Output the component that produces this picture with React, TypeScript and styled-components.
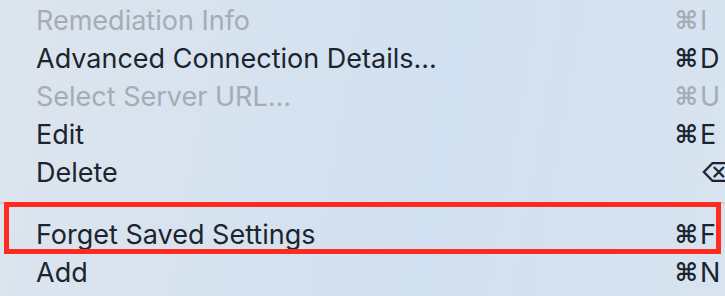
import React from "react";
import styled, { createGlobalStyle } from "styled-components";

const GlobalStyle = createGlobalStyle`
  html, body {
    margin: 0;
    padding: 0;
    width: 725px;
    height: 296px;
    overflow: hidden;
  }
`;

interface ItemData {
  label: string;
  modifier?: string;
  keyGlyph: string;
  disabled?: boolean;
  marked?: boolean;
}

const items: ItemData[] = [
  { label: "Remediation Info", modifier: "⌘", keyGlyph: "I", disabled: true },
  { label: "Advanced Connection Details...", modifier: "⌘", keyGlyph: "D" },
  { label: "Select Server URL...", modifier: "⌘", keyGlyph: "U", disabled: true },
  { label: "Edit", modifier: "⌘", keyGlyph: "E" },
  { label: "Delete", keyGlyph: "⌫" },
];

const bottomItems: ItemData[] = [
  { label: "Forget Saved Settings", modifier: "⌘", keyGlyph: "F", marked: true },
  { label: "Add", modifier: "⌘", keyGlyph: "N" },
];

const MenuRow = ({ label, modifier, keyGlyph, disabled, marked }: ItemData) => (
  <Row disabled={disabled}>
    {marked && <Highlight />}
    <Label>{label}</Label>
    <Modifier>{modifier}</Modifier>
    <KeyCell>{keyGlyph}</KeyCell>
  </Row>
);

const App = () => {
  return (
    <>
      <GlobalStyle />
      <Menu>
        {items.map((item) => (
          <MenuRow key={item.label} {...item} />
        ))}
        <Separator />
        {bottomItems.map((item) => (
          <MenuRow key={item.label} {...item} />
        ))}
      </Menu>
    </>
  );
};

const Menu = styled.div`
  width: 725px;
  height: 296px;
  box-sizing: border-box;
  padding-top: 1px;
  display: flex;
  flex-direction: column;
  overflow: hidden;
  background: linear-gradient(
    100deg,
    #dde5ee 0%,
    #d6e2ef 35%,
    #d1e0f0 60%,
    #d8e3ef 100%
  );
  font-family: Inter, "Liberation Sans", "DejaVu Sans", sans-serif;
`;

const Row = styled.div<{ disabled?: boolean }>`
  position: relative;
  height: 38px;
  display: flex;
  align-items: center;
  padding-left: 36px;
  font-size: 27px;
  color: ${(props) => (props.disabled ? "#a4acb6" : "#1c242f")};
`;

const Label = styled.span`
  flex: 1;
  white-space: nowrap;
`;

const Modifier = styled.span`
  width: 28px;
  text-align: right;
  font-family: "DejaVu Sans", sans-serif;
  font-weight: bold;
  font-size: 25px;
`;

const KeyCell = styled.span`
  width: 25px;
  padding-left: 2px;
  white-space: nowrap;
  font-family: Inter, "DejaVu Sans", sans-serif;
`;

const Separator = styled.div`
  height: 24px;
  display: flex;
  align-items: center;

  &::after {
    content: "";
    display: block;
    width: 100%;
    height: 2px;
    background: #c9d0da;
  }
`;

const Highlight = styled.div`
  position: absolute;
  left: 4px;
  right: 4px;
  top: -13px;
  bottom: -1px;
  border: 5px solid #ff2b1e;
  pointer-events: none;
`;

export default App;
